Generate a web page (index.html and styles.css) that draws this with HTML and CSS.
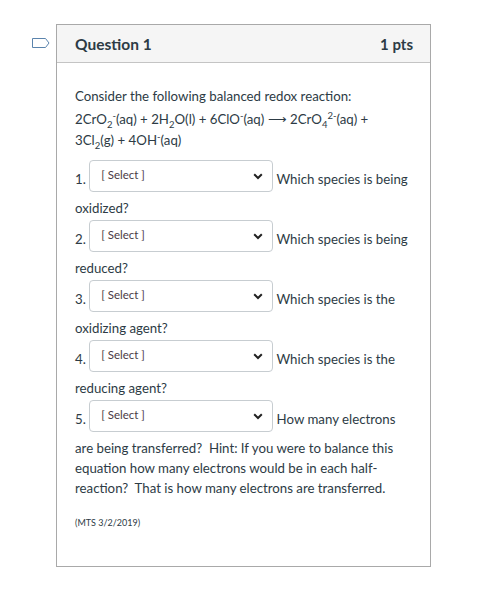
FILE: index.html
```html
<!DOCTYPE html>
<html>
<head>
<meta charset="utf-8">
<link rel="stylesheet" href="styles.css">
</head>
<body>
<div class="page">
  <svg class="flag" width="18" height="10" viewBox="0 0 18 10"><path d="M0.5 0.5 H13.5 L17 5 L13.5 9.5 H0.5 Z" fill="none" stroke="#5b84ad" stroke-width="1"/></svg>
  <div class="card">
    <div class="head">
      <span class="title">Question 1</span>
      <span class="pts">1 pts</span>
    </div>
    <div class="body">
      <p class="intro">Consider the following balanced redox reaction:</p>
      <p class="eq">2CrO<sub>2</sub><sup>-</sup>(aq) + 2H<sub>2</sub>O(l) + 6ClO<sup>-</sup>(aq) <span class="arrow">⟶</span> 2CrO<sub>4</sub><sup>2-</sup>(aq) +<br>3Cl<sub>2</sub>(g) + 4OH<sup>-</sup>(aq)</p>
      <div class="items">
        <p>1. <span class="sel"><span class="ph">[ Select ]</span><svg class="chev" width="10" height="7" viewBox="0 0 10 7"><path d="M1.2 1.3 L5 5 L8.8 1.3" fill="none" stroke="#222" stroke-width="2"/></svg></span> Which species is being oxidized?</p>
        <p>2. <span class="sel"><span class="ph">[ Select ]</span><svg class="chev" width="10" height="7" viewBox="0 0 10 7"><path d="M1.2 1.3 L5 5 L8.8 1.3" fill="none" stroke="#222" stroke-width="2"/></svg></span> Which species is being reduced?</p>
        <p>3. <span class="sel"><span class="ph">[ Select ]</span><svg class="chev" width="10" height="7" viewBox="0 0 10 7"><path d="M1.2 1.3 L5 5 L8.8 1.3" fill="none" stroke="#222" stroke-width="2"/></svg></span> Which species is the oxidizing agent?</p>
        <p>4. <span class="sel"><span class="ph">[ Select ]</span><svg class="chev" width="10" height="7" viewBox="0 0 10 7"><path d="M1.2 1.3 L5 5 L8.8 1.3" fill="none" stroke="#222" stroke-width="2"/></svg></span> Which species is the reducing agent?</p>
        <p>5. <span class="sel"><span class="ph">[ Select ]</span><svg class="chev" width="10" height="7" viewBox="0 0 10 7"><path d="M1.2 1.3 L5 5 L8.8 1.3" fill="none" stroke="#222" stroke-width="2"/></svg></span> How many electrons are being transferred?&nbsp; Hint: If you were to balance this equation how many electrons would be in each half-reaction?&nbsp; That is how many electrons are transferred.</p>
      </div>
      <p class="note">(MTS 3/2/2019)</p>
    </div>
  </div>
</div>
</body>
</html>
```

FILE: styles.css
```css
html, body {
  margin: 0;
  padding: 0;
  background: #ffffff;
}
body {
  font-family: Lato, "Open Sans", sans-serif;
  color: #2d3b45;
}
.page {
  display: flex;
  align-items: flex-start;
  padding: 24px 0 0 32px;
}
.flag {
  display: block;
  margin-top: 14px;
  margin-right: 6px;
  flex: none;
}
.card {
  width: 373px;
  height: 541px;
  border: 1px solid #a9a9a9;
  flex: none;
}
.head {
  height: 37px;
  background: #f5f5f5;
  border-bottom: 1px solid #c4c4c4;
  display: flex;
  align-items: center;
  justify-content: space-between;
  padding: 0 17px 0 18px;
}
.title {
  font-size: 15.5px;
  font-weight: 700;
  color: #2d3b45;
}
.pts {
  font-size: 15px;
  font-weight: 700;
  color: #2d3b45;
}
.body {
  padding: 23px 18px 0 18px;
  font-size: 13.25px;
}
.body p {
  margin: 0;
}
.intro {
  line-height: 21px;
  margin-bottom: 2px !important;
}
.eq {
  line-height: 21px;
}
.eq sub, .eq sup {
  font-size: 9.5px;
  line-height: 0;
}
.arrow {
  font-size: 13.25px;
}
.items {
  margin-top: 7px;
  line-height: 20px;
}
.sel {
  display: inline-block;
  box-sizing: border-box;
  width: 184px;
  height: 32px;
  margin: 2px 0 6px 0;
  vertical-align: -14px;
  overflow: hidden;
  border: 1px solid #c7cdd1;
  border-radius: 4px;
  background: #ffffff;
  position: relative;
}
.ph {
  position: absolute;
  left: 11px;
  top: 7px;
  font-size: 11.5px;
  line-height: 14px;
  color: #4a3b45;
}
.chev {
  position: absolute;
  right: 9px;
  top: 12px;
}
.note {
  margin-top: 19px !important;
  font-size: 9px;
  line-height: 12px;
  color: #2d3b45;
}
```
